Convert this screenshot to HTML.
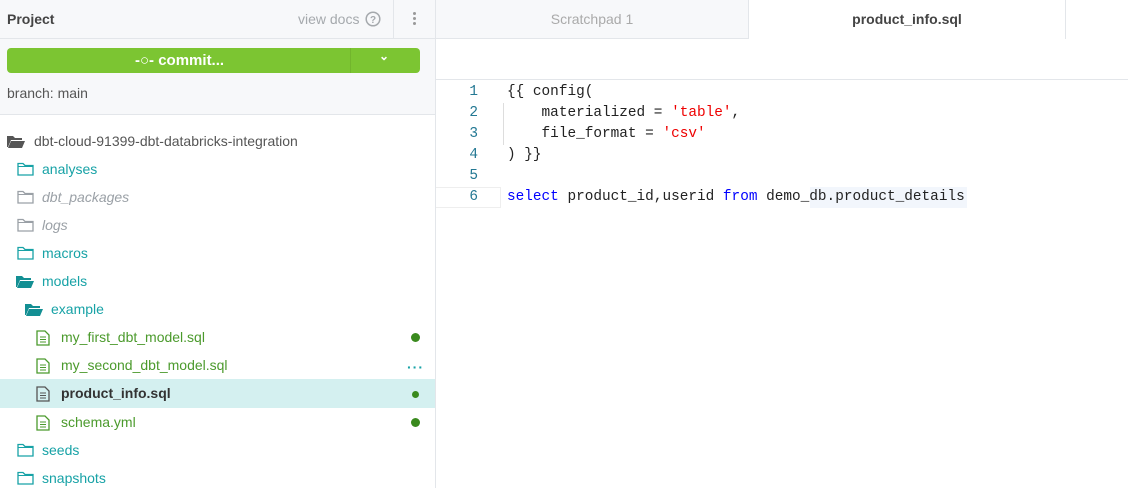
<!DOCTYPE html>
<html><head><meta charset="utf-8"><style>
*{box-sizing:border-box;margin:0;padding:0}
body{width:1128px;height:488px;overflow:hidden;background:#fff;font-family:"Liberation Sans",sans-serif;position:relative}
.left{position:absolute;left:0;top:0;width:436px;height:488px;border-right:1px solid #e3e6ea;background:#fff}
.hdr{position:absolute;left:0;top:0;width:435px;height:39px;background:#f7f8fa;border-bottom:1px solid #e3e6ea}
.top2{position:absolute;left:0;top:39px;width:435px;height:76px;background:#f7f8fa;border-bottom:1px solid #e3e6ea}
.row{position:absolute;left:0;width:435px;height:28px;font-size:14px;line-height:28px;white-space:nowrap}
.row svg{position:absolute;top:7px}
.row span{position:absolute}
.teal{color:#17a2a6}.gray{color:#9aa0a6;font-style:italic}.green{color:#4b9a2c}
.dot{position:absolute;right:15px;top:10px;width:9px;height:9px;border-radius:50%;background:#3a8a1e}
.code{position:absolute;left:436px;top:80px;width:692px;font-family:"Liberation Mono",monospace;font-size:14.4px}
.ln{position:absolute;left:0;width:42px;text-align:right;color:#237893;height:21px;line-height:21px}
.cl{position:absolute;left:71px;height:21px;line-height:21px;white-space:pre;color:#222}
</style></head><body>
<div class="left">
 <div class="hdr">
  <span style="position:absolute;left:7px;top:11px;font-size:14px;font-weight:bold;color:#444">Project</span>
  <span style="position:absolute;left:298px;top:11px;font-size:14px;color:#a5a9ad">view docs</span>
  <svg style="position:absolute;left:365px;top:11px" width="16" height="16" viewBox="0 0 16 16"><circle cx="8" cy="8" r="6.8" fill="none" stroke="#a5a9ad" stroke-width="1.5"/><text x="8" y="12" font-size="10" font-weight="bold" text-anchor="middle" fill="#a5a9ad" font-family="Liberation Sans">?</text></svg>
  <div style="position:absolute;left:393px;top:0;width:1px;height:38px;background:#e3e6ea"></div>
  <div style="position:absolute;left:413px;top:12px;width:3px;height:3px;border-radius:50%;background:#999;box-shadow:0 5px 0 #999,0 10px 0 #999"></div>
 </div>
 <div class="top2">
  <div style="position:absolute;left:7px;top:9px;width:413px;height:25px;background:#7cc532;border-radius:4px">
   <div style="position:absolute;left:343px;top:0;width:1px;height:25px;background:#72b52d"></div>
   <span style="position:absolute;left:128px;top:4px;color:#fff;font-weight:bold;font-size:15px">-○- commit...</span>
   <span style="position:absolute;left:372px;top:1px;color:#fff;font-size:12px;font-weight:bold">⌄</span>
  </div>
  <span style="position:absolute;left:7px;top:46px;font-size:14px;color:#555">branch: main</span>
 </div>
 <div class="row" style="top:127px"><svg style="left:7px" width="18" height="14" viewBox="0 0 18 14"><path d="M0 2 h6 l2 2 h7 v2 H4 L1 13 H0z M4 7 h14 l-3 7 H1z" fill="#555"/></svg><span style="left:34px;color:#555">dbt-cloud-91399-dbt-databricks-integration</span></div>
 <div class="row" style="top:155px"><svg style="left:17px" width="17" height="14" viewBox="0 0 17 14"><path d="M1 1.5h5l2 2h8v9.5H1z" fill="none" stroke="#17a2a6" stroke-width="1.3"/><path d="M1 4.5h15" stroke="#17a2a6"/></svg><span class="teal" style="left:42px">analyses</span></div>
 <div class="row" style="top:183px"><svg style="left:17px" width="17" height="14" viewBox="0 0 17 14"><path d="M1 1.5h5l2 2h8v9.5H1z" fill="none" stroke="#9aa0a6" stroke-width="1.3"/><path d="M1 4.5h15" stroke="#9aa0a6"/></svg><span class="gray" style="left:42px">dbt_packages</span></div>
 <div class="row" style="top:211px"><svg style="left:17px" width="17" height="14" viewBox="0 0 17 14"><path d="M1 1.5h5l2 2h8v9.5H1z" fill="none" stroke="#9aa0a6" stroke-width="1.3"/><path d="M1 4.5h15" stroke="#9aa0a6"/></svg><span class="gray" style="left:42px">logs</span></div>
 <div class="row" style="top:239px"><svg style="left:17px" width="17" height="14" viewBox="0 0 17 14"><path d="M1 1.5h5l2 2h8v9.5H1z" fill="none" stroke="#17a2a6" stroke-width="1.3"/><path d="M1 4.5h15" stroke="#17a2a6"/></svg><span class="teal" style="left:42px">macros</span></div>
 <div class="row" style="top:267px"><svg style="left:16px" width="18" height="14" viewBox="0 0 18 14"><path d="M0 2 h6 l2 2 h7 v2 H4 L1 13 H0z M4 7 h14 l-3 7 H1z" fill="#138f93"/></svg><span class="teal" style="left:42px">models</span></div>
 <div class="row" style="top:295px"><svg style="left:25px" width="18" height="14" viewBox="0 0 18 14"><path d="M0 2 h6 l2 2 h7 v2 H4 L1 13 H0z M4 7 h14 l-3 7 H1z" fill="#138f93"/></svg><span class="teal" style="left:51px">example</span></div>
 <div class="row" style="top:323px"><svg style="left:36px" width="14" height="16" viewBox="0 0 14 16"><path d="M1 1h8l4 4v10H1z" fill="none" stroke="#4b9a2c" stroke-width="1.3"/><path d="M4 7h6M4 9.5h6M4 12h6" stroke="#4b9a2c"/></svg><span class="green" style="left:61px">my_first_dbt_model.sql</span><div class="dot"></div></div>
 <div class="row" style="top:351px"><svg style="left:36px" width="14" height="16" viewBox="0 0 14 16"><path d="M1 1h8l4 4v10H1z" fill="none" stroke="#4b9a2c" stroke-width="1.3"/><path d="M4 7h6M4 9.5h6M4 12h6" stroke="#4b9a2c"/></svg><span class="green" style="left:61px">my_second_dbt_model.sql</span><span style="left:407px;top:2px;color:#17a2a6;font-weight:bold;letter-spacing:1px">···</span></div>
 <div class="row" style="top:379px;height:29px;background:#d4f0f0"><svg style="left:36px" width="14" height="16" viewBox="0 0 14 16"><path d="M1 1h8l4 4v10H1z" fill="none" stroke="#555" stroke-width="1.3"/><path d="M4 7h6M4 9.5h6M4 12h6" stroke="#555"/></svg><span style="left:61px;font-weight:bold;color:#333">product_info.sql</span><div class="dot" style="width:7px;height:7px;right:16px;top:12px"></div></div>
 <div class="row" style="top:408px"><svg style="left:36px" width="14" height="16" viewBox="0 0 14 16"><path d="M1 1h8l4 4v10H1z" fill="none" stroke="#4b9a2c" stroke-width="1.3"/><path d="M4 7h6M4 9.5h6M4 12h6" stroke="#4b9a2c"/></svg><span class="green" style="left:61px">schema.yml</span><div class="dot"></div></div>
 <div class="row" style="top:436px"><svg style="left:17px" width="17" height="14" viewBox="0 0 17 14"><path d="M1 1.5h5l2 2h8v9.5H1z" fill="none" stroke="#17a2a6" stroke-width="1.3"/><path d="M1 4.5h15" stroke="#17a2a6"/></svg><span class="teal" style="left:42px">seeds</span></div>
 <div class="row" style="top:464px"><svg style="left:17px" width="17" height="14" viewBox="0 0 17 14"><path d="M1 1.5h5l2 2h8v9.5H1z" fill="none" stroke="#17a2a6" stroke-width="1.3"/><path d="M1 4.5h15" stroke="#17a2a6"/></svg><span class="teal" style="left:42px">snapshots</span></div>
</div>
<div style="position:absolute;left:436px;top:0;width:313px;height:39px;background:#f7f8fa;border-right:1px solid #e3e6ea;border-bottom:1px solid #e3e6ea;text-align:center;line-height:38px;font-size:14px;color:#aaa">Scratchpad 1</div>
<div style="position:absolute;left:749px;top:0;width:317px;height:39px;border-right:1px solid #e3e6ea;text-align:center;line-height:38px;font-size:14px;font-weight:bold;color:#444">product_info.sql</div>
<div style="position:absolute;left:436px;top:79px;width:692px;height:1px;background:#e3e6ea"></div>
<div class="code">
 <div class="ln" style="top:2px">1</div><div class="cl" style="top:2px">{{ config(</div>
 <div class="ln" style="top:23px">2</div><div class="cl" style="top:23px">    materialized = <span style="color:#e00">'table'</span>,</div>
 <div class="ln" style="top:44px">3</div><div class="cl" style="top:44px">    file_format = <span style="color:#e00">'csv'</span></div>
 <div class="ln" style="top:65px">4</div><div class="cl" style="top:65px">) }}</div>
 <div class="ln" style="top:86px">5</div>
 <div style="position:absolute;left:0;top:107px;width:65px;height:21px;border:1px solid #eee;border-left:0"></div>
 <div style="position:absolute;left:374px;top:107px;width:157px;height:21px;background:#f2f6fc"></div>
 <div class="ln" style="top:107px">6</div><div class="cl" style="top:107px"><span style="color:#00f">select</span> product_id,userid <span style="color:#00f">from</span> demo_db.product_details</div>
 <div style="position:absolute;left:67px;top:23px;width:1px;height:42px;background:#ddd"></div>
</div>
</body></html>
